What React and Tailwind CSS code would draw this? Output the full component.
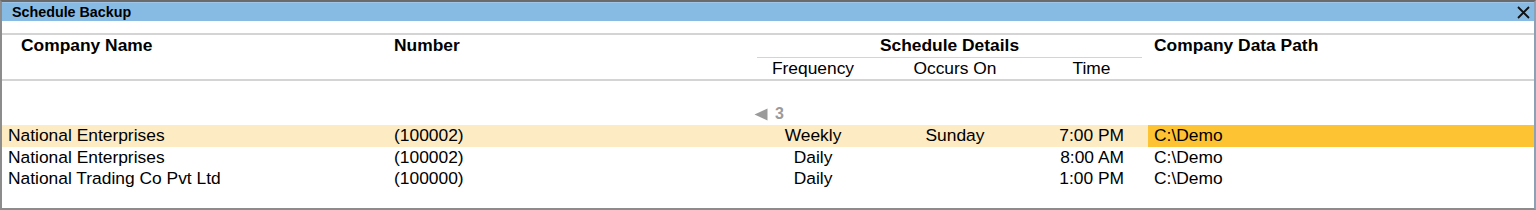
import React from "react";

const rows = [
  { name: "National Enterprises", num: "(100002)", freq: "Weekly", on: "Sunday", time: "7:00 PM", path: "C:\\Demo", sel: true },
  { name: "National Enterprises", num: "(100002)", freq: "Daily", on: "", time: "8:00 AM", path: "C:\\Demo" },
  { name: "National Trading Co Pvt Ltd", num: "(100000)", freq: "Daily", on: "", time: "1:00 PM", path: "C:\\Demo" },
];

export default function App() {
  return (
    <div
      className="w-[1536px] h-[210px] bg-white text-black border-t-2 border-l-2 border-b-2 border-r-2 border-t-[#6a6a6a] border-l-[#8c8c8c] border-b-[#8c8c8c] border-r-[#8aa2b8] overflow-hidden"
      style={{ fontFamily: '"Liberation Sans", Arial, sans-serif' }}
    >
      <div className="h-[19px] bg-[#88bbe4] flex items-center justify-between pl-[10px] pr-[4px] border-t border-t-[#9fc6e8]">
        <span className="text-[14.3px] font-bold leading-none">Schedule Backup</span>
        <svg width="13" height="13" viewBox="0 0 13 13">
          <path d="M1 1 L12 12 M12 1 L1 12" stroke="#111" strokeWidth="1.8" />
        </svg>
      </div>
      <div className="h-[12px]" />
      <div className="h-[2px] bg-[#d4d4d4]" />
      <div className="flex h-[44px] text-[17.4px] leading-none">
        <div className="w-[392px] pl-[19px] pt-[2px] font-bold">Company Name</div>
        <div className="w-[363px] pt-[2px] font-bold">Number</div>
        <div className="w-[385px] flex flex-col">
          <div className="h-[22px] flex items-center justify-center font-bold">Schedule Details</div>
          <div className="h-px bg-[#d4d4d4]" />
          <div className="flex flex-1 items-center">
            <div className="w-[112px] text-center">Frequency</div>
            <div className="w-[172px] text-center">Occurs On</div>
            <div className="w-[101px] text-center">Time</div>
          </div>
        </div>
        <div className="w-[6px]" />
        <div className="flex-1 pl-[6px] pt-[2px] font-bold">Company Data Path</div>
      </div>
      <div className="h-[2px] bg-[#d4d4d4]" />
      <div className="h-[44px] flex items-end">
        <div className="h-[22px] flex items-center pl-[752px] text-[#9a9a9a] text-[16px] font-bold gap-[7px]">
          <svg width="14" height="13" viewBox="0 0 14 13">
            <path d="M0.5 6.5 L13.5 0.5 L13.5 12.5 Z" fill="#9a9a9a" />
          </svg>
          <span>3</span>
        </div>
      </div>
      {rows.map((r, i) => (
        <div key={i} className={`flex items-center text-[17.4px] leading-none ${i === 1 ? "h-[21px]" : "h-[22px]"}`}>
          <div className={`flex items-center h-full w-[1146px] ${r.sel ? "bg-[#fdebc3]" : ""}`}>
            <div className="w-[392px] pl-[6px]">{r.name}</div>
            <div className="w-[363px]">{r.num}</div>
            <div className="w-[112px] text-center">{r.freq}</div>
            <div className="w-[172px] text-center">{r.on}</div>
            <div className="w-[101px] text-right pr-[18px]">{r.time}</div>
          </div>
          <div className={`flex items-center h-full flex-1 pl-[6px] ${r.sel ? "bg-[#fec332]" : ""}`}>{r.path}</div>
        </div>
      ))}
    </div>
  );
}
